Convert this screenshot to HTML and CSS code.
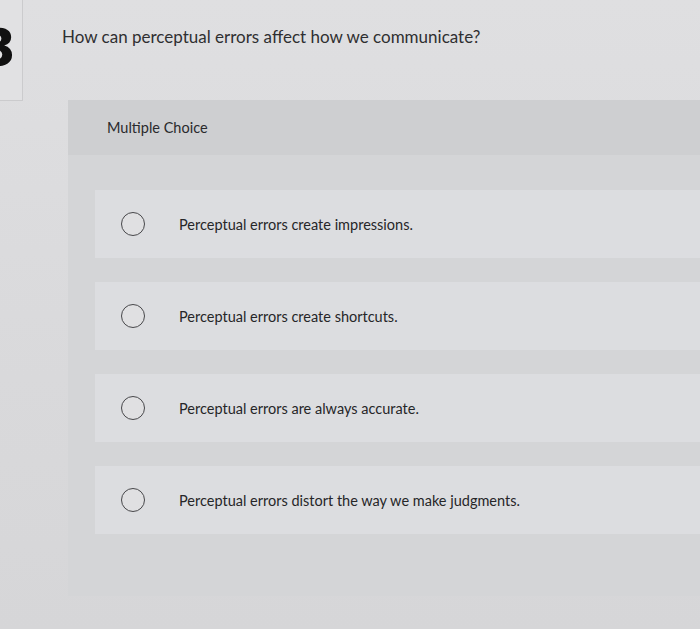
FILE: index.html
```html
<!DOCTYPE html>
<html lang="en">
<head>
<meta charset="utf-8">
<title>Multiple Choice</title>
<link rel="stylesheet" href="styles.css">
</head>
<body>
<div class="page">
  <aside class="qnum"><span class="qnum-digit">3</span></aside>
  <main class="main">
    <p class="question">How can perceptual errors affect how we communicate?</p>
    <section class="card">
      <header class="card-head">Multiple Choice</header>
      <div class="options">
        <label class="option"><span class="radio"></span><span class="opt-text">Perceptual errors create impressions.</span></label>
        <label class="option"><span class="radio"></span><span class="opt-text">Perceptual errors create shortcuts.</span></label>
        <label class="option"><span class="radio"></span><span class="opt-text">Perceptual errors are always accurate.</span></label>
        <label class="option"><span class="radio"></span><span class="opt-text">Perceptual errors distort the way we make judgments.</span></label>
      </div>
    </section>
  </main>
</div>
</body>
</html>
```

FILE: styles.css
```css
html, body {
  margin: 0;
  padding: 0;
}
body {
  background: #d9d9db;
  font-family: "Lato", "Open Sans", sans-serif;
  color: #2e2e30;
  width: 700px;
  height: 629px;
  overflow: hidden;
}
.page {
  display: flex;
  align-items: flex-start;
  height: 629px;
  background: linear-gradient(180deg, #dfdfe1 0%, #d9d9db 60%, #d6d6d8 100%);
}
.qnum {
  flex: 0 0 22px;
  height: 100px;
  background: #e1e1e3;
  border-right: 1px solid #cbcbcd;
  border-bottom: 1px solid #cbcbcd;
  overflow: hidden;
}
.qnum-digit {
  display: block;
  margin-left: -20px;
  margin-top: 20px;
  font-family: "DejaVu Sans", sans-serif;
  font-weight: bold;
  font-size: 52px;
  line-height: 56px;
  color: #111;
}
.main {
  flex: 1;
  min-width: 0;
  padding-left: 39px;
}
.question {
  margin: 0;
  padding-top: 26px;
  height: 74px;
  font-size: 17px;
  line-height: 22px;
  color: #2f2f31;
}
.card {
  margin-left: 6px;
  margin-right: -20px;
  background: #d4d5d7;
  height: 496px;
}
.card-head {
  height: 55px;
  background: #cecfd1;
  padding-left: 39px;
  font-size: 14.5px;
  line-height: 55px;
  color: #2a2a2c;
}
.options {
  display: flex;
  flex-direction: column;
  gap: 24px;
  padding: 35px 0 0 27px;
}
.option {
  display: flex;
  align-items: center;
  height: 68px;
  background: #dcdde0;
}
.radio {
  flex: 0 0 auto;
  width: 22px;
  height: 22px;
  margin-left: 26px;
  margin-right: 34px;
  border: 1.5px solid #47474a;
  border-radius: 50%;
  background: #e0e0e2;
}
.opt-text {
  font-size: 14.5px;
  color: #262628;
}
```
